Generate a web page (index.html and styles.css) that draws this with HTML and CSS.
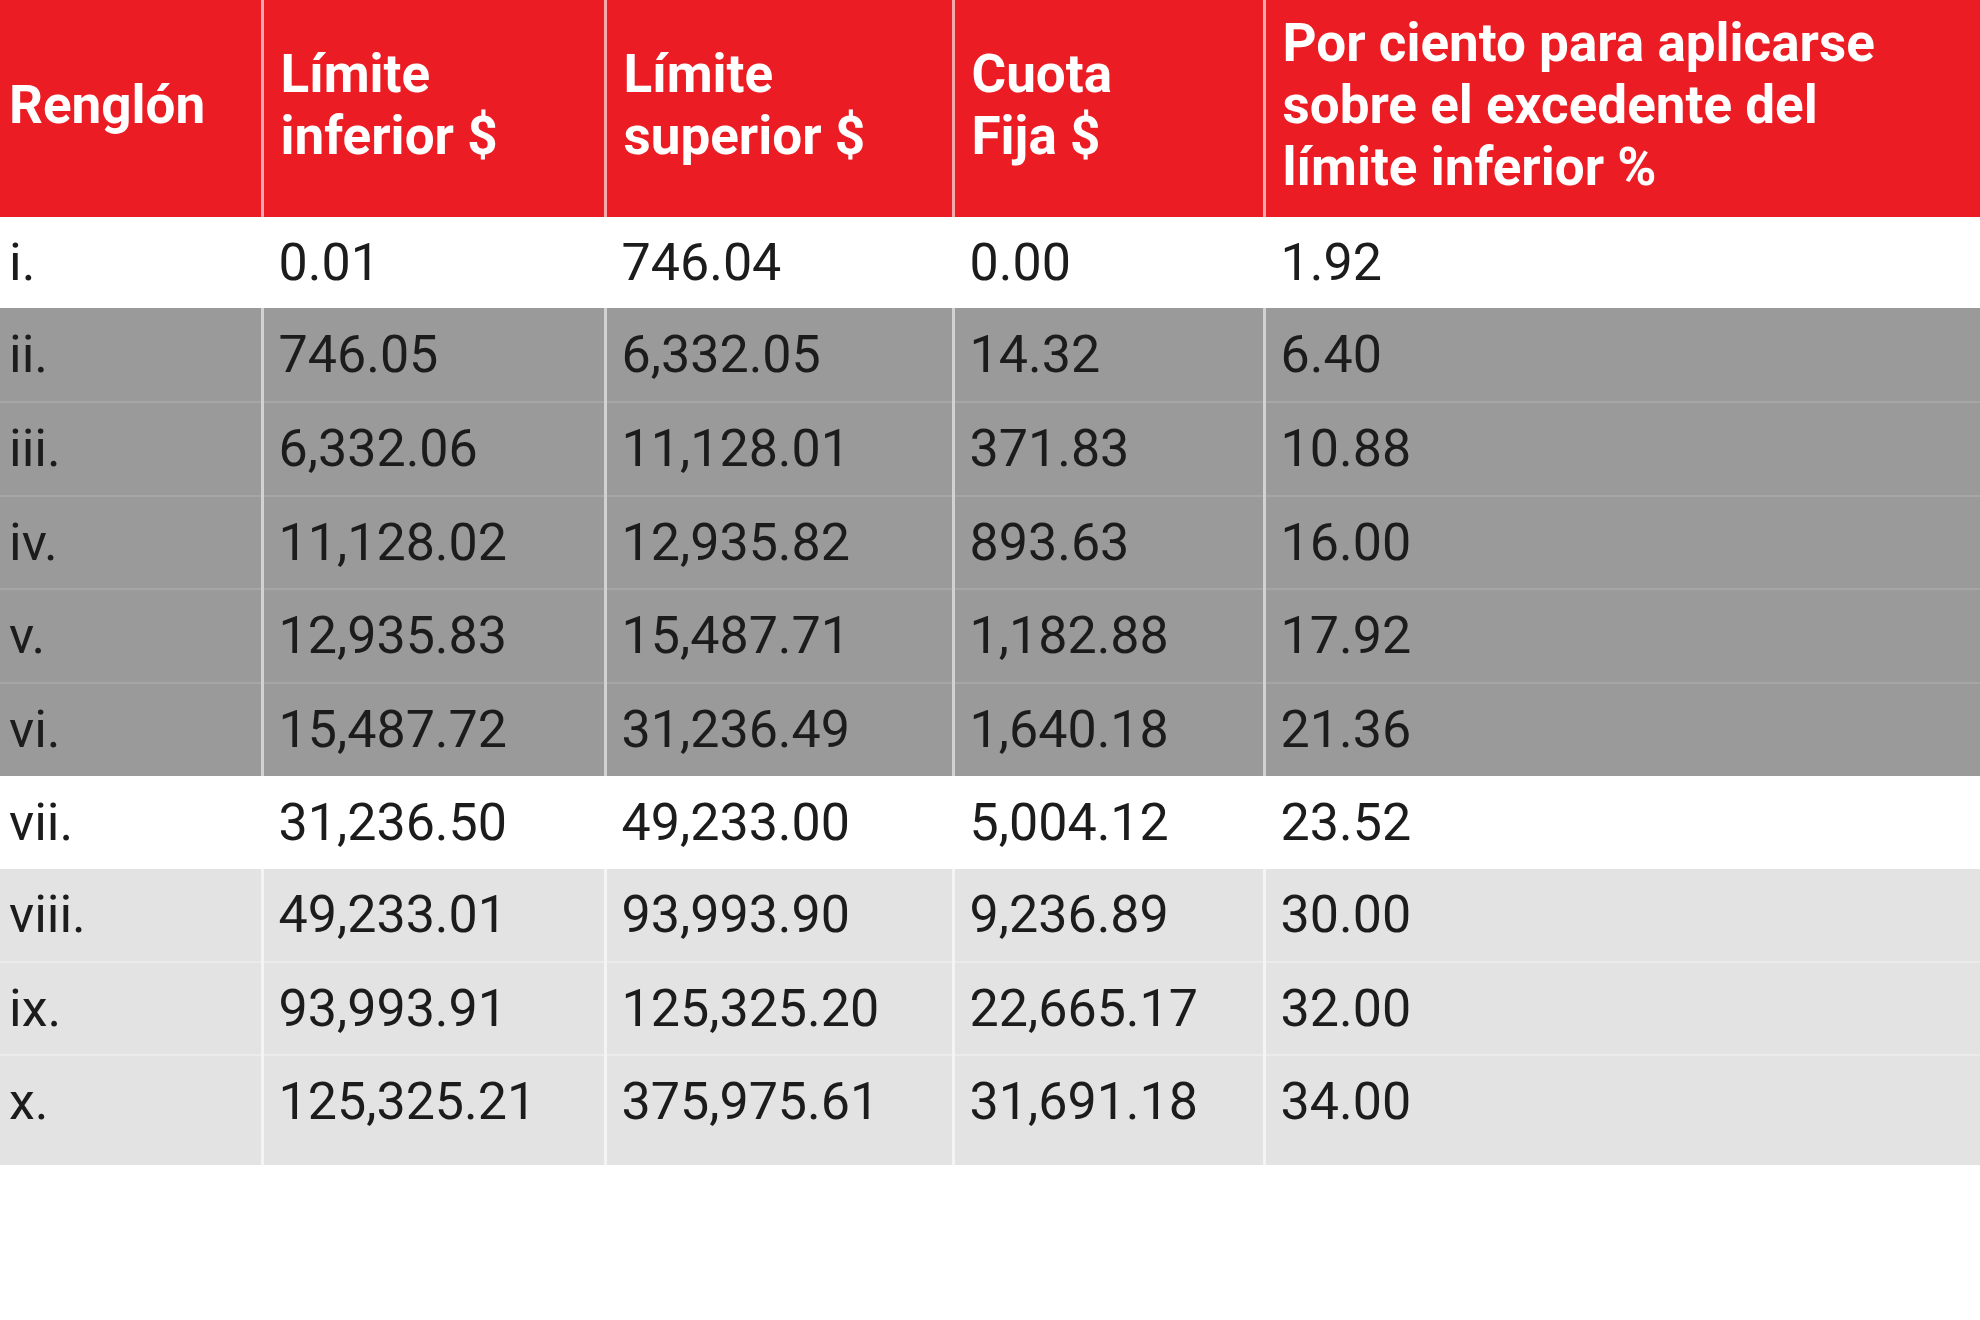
FILE: index.html
```html
<!DOCTYPE html>
<html lang="es">
<head>
<meta charset="utf-8">
<title>Tabla ISR</title>
<link rel="stylesheet" href="styles.css">
</head>
<body>
<table class="tarifa">
  <colgroup>
    <col class="c1"><col class="c2"><col class="c3"><col class="c4"><col class="c5">
  </colgroup>
  <thead>
    <tr>
      <th>Renglón</th>
      <th>Límite<br>inferior $</th>
      <th>Límite<br>superior $</th>
      <th>Cuota<br>Fija $</th>
      <th>Por ciento para aplicarse<br>sobre el excedente del<br>límite inferior %</th>
    </tr>
  </thead>
  <tbody>
    <tr class="white"><td>i.</td><td>0.01</td><td>746.04</td><td>0.00</td><td>1.92</td></tr>
    <tr class="dark"><td>ii.</td><td>746.05</td><td>6,332.05</td><td>14.32</td><td>6.40</td></tr>
    <tr class="dark"><td>iii.</td><td>6,332.06</td><td>11,128.01</td><td>371.83</td><td>10.88</td></tr>
    <tr class="dark short"><td>iv.</td><td>11,128.02</td><td>12,935.82</td><td>893.63</td><td>16.00</td></tr>
    <tr class="dark"><td>v.</td><td>12,935.83</td><td>15,487.71</td><td>1,182.88</td><td>17.92</td></tr>
    <tr class="dark short"><td>vi.</td><td>15,487.72</td><td>31,236.49</td><td>1,640.18</td><td>21.36</td></tr>
    <tr class="white"><td>vii.</td><td>31,236.50</td><td>49,233.00</td><td>5,004.12</td><td>23.52</td></tr>
    <tr class="light"><td>viii.</td><td>49,233.01</td><td>93,993.90</td><td>9,236.89</td><td>30.00</td></tr>
    <tr class="light"><td>ix.</td><td>93,993.91</td><td>125,325.20</td><td>22,665.17</td><td>32.00</td></tr>
    <tr class="light last"><td>x.</td><td>125,325.21</td><td>375,975.61</td><td>31,691.18</td><td>34.00</td></tr>
  </tbody>
</table>
</body>
</html>
```
FILE: styles.css
```css
html, body {
  margin: 0;
  padding: 0;
  background: #ffffff;
}

body {
  width: 1980px;
  height: 1320px;
  overflow: hidden;
  font-family: Roboto, "Liberation Sans", sans-serif;
}

.tarifa {
  width: 1980px;
  border-collapse: collapse;
  table-layout: fixed;
}

.c1 { width: 262px; }
.c2 { width: 343px; }
.c3 { width: 348px; }
.c4 { width: 311px; }
.c5 { width: 716px; }

.tarifa th {
  background: #ec1c24;
  color: #ffffff;
  font-weight: 700;
  font-size: 53px;
  line-height: 62px;
  letter-spacing: 0;
  text-align: left;
  vertical-align: middle;
  height: 217px;
  padding: 0 0 8px 17px;
  box-sizing: border-box;
  border-left: 3px solid #f6a9ab;
  white-space: nowrap;
}

.tarifa td {
  font-size: 52px;
  line-height: 60px;
  color: #1c1c1c;
  text-align: left;
  vertical-align: middle;
  height: 93px;
  padding: 0 0 0 15px;
  box-sizing: border-box;
  border-left: 3px solid rgba(255, 255, 255, 0.55);
  white-space: nowrap;
}

.tarifa th:first-child,
.tarifa td:first-child {
  border-left: none;
  padding-left: 9px;
}

.tarifa tr.white td {
  background: #ffffff;
  border-left-color: #ffffff;
}

.tarifa tr.white:first-child td {
  height: 91px;
}

.tarifa tr.dark td {
  height: 94px;
  background: #9a9a9a;
  border-left-color: #d2d2d2;
  border-top: 2px solid #a6a6a6;
}

.tarifa tr.dark.short td {
  height: 93px;
}

.tarifa tr.white + tr.dark td,
.tarifa tr.white + tr.light td {
  border-top: none;
}

.tarifa tr.light td {
  background: #e3e3e3;
  border-left-color: #f4f4f4;
  border-top: 2px solid #ebebeb;
}

.tarifa tr.last td {
  height: 110px;
  padding-bottom: 17px;
}
```
